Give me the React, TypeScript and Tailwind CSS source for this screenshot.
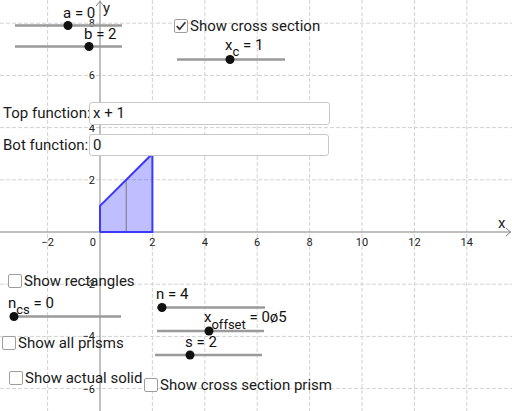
import React from "react";

// graphics view coordinates
const ox = 100;
const oy = 232;
const ux = 26.2;
const uy = 26.1;
const X = (v: number) => ox + v * ux;
const Y = (v: number) => oy - v * uy;

const gridXs = [-2, 2, 4, 6, 8, 10, 12, 14];
const gridYs = [-6, -4, -2, 2, 4, 6, 8];

interface SliderProps {
    x1: number;
    x2: number;
    y: number;
    px: number;
}

function Slider({ x1, x2, y, px }: SliderProps) {
    return (
        <g>
            <line x1={x1} y1={y} x2={x2} y2={y} stroke="#9a9a9a" strokeWidth={2.5} />
            <circle cx={px} cy={y} r={4.5} fill="#111" />
        </g>
    );
}

function CheckBox({ checked, label, className }: { checked?: boolean; label: string; className: string }) {
    return (
        <div className={`absolute flex items-center gap-[2px] ${className}`}>
            <span className="flex h-[14px] w-[14px] items-center justify-center rounded-[2px] border border-[#9e9e9e] bg-white">
                {checked && (
                    <svg width="12" height="12" viewBox="0 0 12 12">
                        <path d="M1.8 6.2 L4.6 9.2 L10.4 2.2" fill="none" stroke="#333" strokeWidth={1.7} />
                    </svg>
                )}
            </span>
            <span className="text-[15px] leading-[18px] text-[#1a1a1a] whitespace-nowrap">{label}</span>
        </div>
    );
}

function FunctionInput({ label, value, className }: { label: string; value: string; className: string }) {
    return (
        <div className="flex items-center">
            <span className="w-[86px] shrink-0 whitespace-nowrap text-[15px] text-[#1a1a1a]">{label}</span>
            <div className={`flex items-center rounded-[3px] border border-[#c8c8c8] bg-white pl-[3px] text-[15px] text-[#1a1a1a] ${className}`}>
                {value}
            </div>
        </div>
    );
}

export default function App() {
    return (
        <div className="relative h-[411px] w-[512px] overflow-hidden bg-white font-['Roboto',sans-serif]">
            <svg className="absolute inset-0" width="512" height="411" viewBox="0 0 512 411">
                {/* grid */}
                {gridXs.map((v) => (
                    <line key={`gx${v}`} x1={X(v)} y1={0} x2={X(v)} y2={411} stroke="#d2d2d2" strokeDasharray="4 2" />
                ))}
                {gridYs.map((v) => (
                    <line key={`gy${v}`} x1={0} y1={Y(v)} x2={512} y2={Y(v)} stroke="#d2d2d2" strokeDasharray="4 2" />
                ))}

                {/* region */}
                <polygon
                    points={`${X(0)},${Y(0)} ${X(0)},${Y(1)} ${X(2)},${Y(3)} ${X(2)},${Y(0)}`}
                    fill="rgba(60,60,255,0.33)"
                />
                <line x1={X(1)} y1={Y(0)} x2={X(1)} y2={Y(2)} stroke="#777" strokeWidth={1} />

                {/* axes */}
                <line x1={0} y1={oy} x2={511} y2={oy} stroke="#808080" strokeWidth={1} />
                <polyline points={`506,${oy - 4} 510.5,${oy} 506,${oy + 4}`} fill="none" stroke="#808080" />
                <line x1={ox} y1={0.5} x2={ox} y2={411} stroke="#808080" strokeWidth={1} />
                <polyline points={`${ox - 4},6 ${ox},1.5 ${ox + 4},6`} fill="none" stroke="#808080" />

                <polyline
                    points={`${X(0)},${Y(0)} ${X(0)},${Y(1)} ${X(2)},${Y(3)} ${X(2)},${Y(0)} ${X(0)},${Y(0)}`}
                    fill="none"
                    stroke="#3a3aff"
                    strokeWidth={2}
                />

                {/* axis labels */}
                <g fill="#222" fontSize={11}>
                    {gridXs.map((v) => (
                        <text key={`lx${v}`} x={X(v)} y={246} textAnchor="middle">
                            {v < 0 ? `\u2212${-v}` : v}
                        </text>
                    ))}
                    <text x={96} y={246} textAnchor="end">0</text>
                    {gridYs.map((v) => (
                        <text key={`ly${v}`} x={95} y={Y(v) + 4} textAnchor="end">
                            {v < 0 ? `\u2212${-v}` : v}
                        </text>
                    ))}
                </g>
                <text x={103} y={13} fontSize={15} fill="#222">y</text>
                <text x={498} y={228} fontSize={15} fill="#222">x</text>

                {/* sliders */}
                <Slider x1={15} x2={122} y={25.5} px={68} />
                <Slider x1={15} x2={122} y={46.5} px={89} />
                <Slider x1={177} x2={285} y={59.5} px={230} />
                <Slider x1={14} x2={121} y={316.5} px={14} />
                <Slider x1={157} x2={265} y={307.5} px={162} />
                <Slider x1={157} x2={264} y={331} px={209} />
                <Slider x1={155} x2={262} y={355} px={190} />

                <g fontSize={15} fill="#111" className="whitespace-pre">
                    <text x={63} y={18}>a = 0</text>
                    <text x={84} y={39}>b = 2</text>
                    <text x={225} y={50}>
                        x<tspan fontSize={13} dy={6}>c</tspan>
                        <tspan dy={-6}> = 1</tspan>
                    </text>
                    <text x={8} y={308}>
                        n<tspan fontSize={13} dy={6}>cs</tspan>
                        <tspan dy={-6}> = 0</tspan>
                    </text>
                    <text x={156} y={299}>n = 4</text>
                    <text x={204} y={322}>
                        x<tspan fontSize={13} dy={7}>offset</tspan>
                        <tspan dy={-7}> = 0ø5</tspan>
                    </text>
                    <text x={185} y={347}>s = 2</text>
                </g>
            </svg>

            <CheckBox checked label="Show cross section" className="left-[174px] top-[17px]" />

            <div className="absolute left-[3px] top-[102px] flex flex-col gap-[9px]">
                <FunctionInput label="Top function:" value="x + 1" className="h-[23px] w-[241px]" />
                <FunctionInput label="Bot function:" value="0" className="h-[22px] w-[240px]" />
            </div>

            <CheckBox label="Show rectangles" className="left-[8px] top-[272px]" />
            <CheckBox label="Show all prisms" className="left-[2px] top-[334px]" />
            <CheckBox label="Show actual solid" className="left-[9px] top-[369px]" />
            <CheckBox label="Show cross section prism" className="left-[144px] top-[376px]" />
        </div>
    );
}
